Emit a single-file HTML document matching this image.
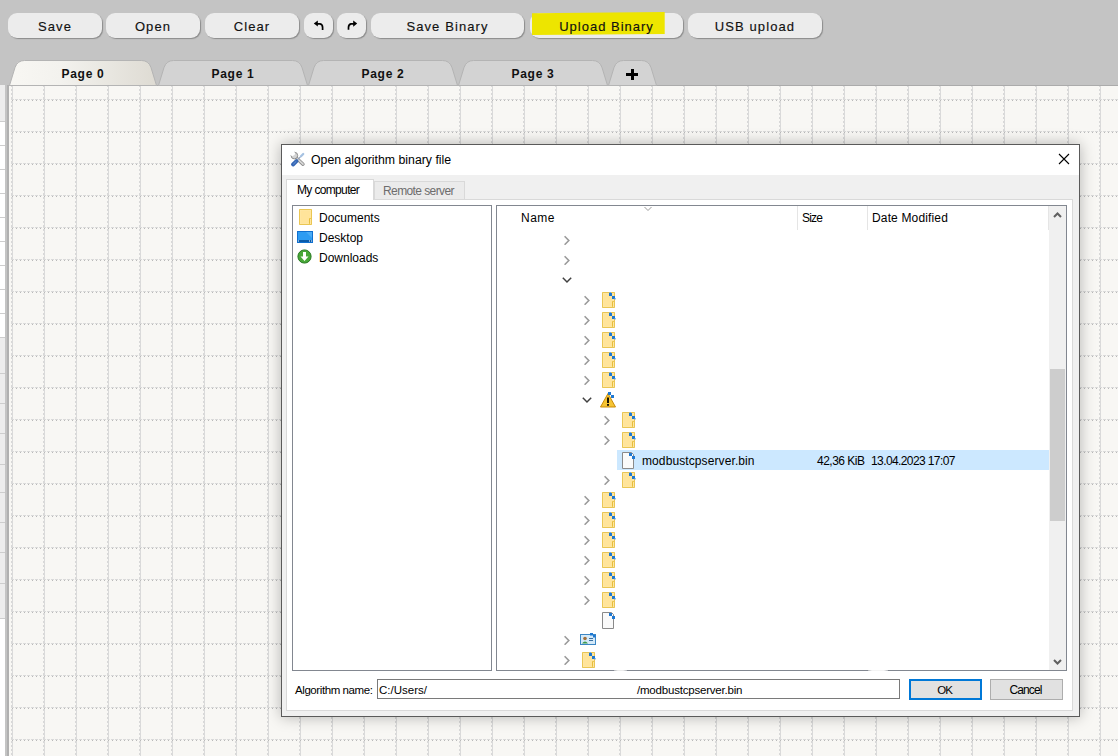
<!DOCTYPE html>
<html><head><meta charset="utf-8">
<style>
html,body{margin:0;padding:0;}
body{width:1118px;height:756px;position:relative;overflow:hidden;background:#c4c4c4;font-family:"Liberation Sans",sans-serif;}
div,span,svg{position:absolute;box-sizing:border-box;}
.btn{top:13px;height:25px;background:#ececec;border-radius:9px;box-shadow:1px 1px 1px #8c8c8c;font-size:13px;color:#111;text-align:center;line-height:28px;letter-spacing:1.1px;white-space:nowrap;-webkit-text-stroke:0.15px #111;}
.tab{top:60px;height:26px;}
.tab span{top:7px;left:0;width:100%;text-align:center;font-weight:bold;font-size:12px;color:#111;letter-spacing:0.7px;}
.t{font-size:12px;color:#000;white-space:nowrap;line-height:14px;}
.chev{width:7px;height:10px;}
.fold{width:16px;height:16px;}
</style></head><body>
<!-- toolbar buttons -->
<div class="btn" style="left:8px;width:94px;">Save</div>
<div class="btn" style="left:106px;width:94px;">Open</div>
<div class="btn" style="left:205px;width:94px;">Clear</div>
<div class="btn" style="left:304px;width:29px;"></div><svg style="left:310px;top:16px;" width="20" height="18" viewBox="310 16 20 18"><path d="M313.8,23.5 L317.8,20.5 L317.8,26.6 Z" fill="#000"/><path d="M317,23.9 L320,23.9 Q322.6,24.4 322.6,27.4 L322.6,30" fill="none" stroke="#000" stroke-width="1.7"/></svg>
<div class="btn" style="left:337px;width:29px;"></div><svg style="left:342px;top:16px;" width="20" height="18" viewBox="342 16 20 18"><path d="M357.2,23.5 L353.2,20.5 L353.2,26.8 Z" fill="#000"/><path d="M354,23.9 L351,23.9 Q348.5,24.6 348.5,27.4 L348.5,29.8" fill="none" stroke="#000" stroke-width="1.7"/></svg>
<div class="btn" style="left:371px;width:153px;">Save Binary</div>
<div class="btn" style="left:530px;width:153px;"></div>
<svg style="left:530px;top:10px;" width="140" height="28"><polygon points="2,3.2 134.7,2 134.7,24 2,25" fill="#ede500"/></svg>
<div class="btn" style="left:530px;width:153px;background:transparent;box-shadow:none;letter-spacing:1px;">Upload Binary</div>
<div class="btn" style="left:688px;width:134px;">USB upload</div>

<!-- canvas -->
<div style="left:0;top:85px;width:5px;height:36px;background:#ededed;"></div>
<div style="left:0;top:121px;width:5px;height:216px;background:#fff;"></div>
<div style="left:0;top:337px;width:5px;height:281px;background:#ededed;"></div>
<div style="left:0;top:618px;width:5px;height:138px;background:#fff;"></div>
<div style="left:0;top:121px;width:5px;height:1px;background:#cdcdcd;"></div>
<div style="left:0;top:145px;width:5px;height:1px;background:#cdcdcd;"></div>
<div style="left:0;top:169px;width:5px;height:1px;background:#cdcdcd;"></div>
<div style="left:0;top:193px;width:5px;height:1px;background:#cdcdcd;"></div>
<div style="left:0;top:217px;width:5px;height:1px;background:#cdcdcd;"></div>
<div style="left:0;top:241px;width:5px;height:1px;background:#cdcdcd;"></div>
<div style="left:0;top:265px;width:5px;height:1px;background:#cdcdcd;"></div>
<div style="left:0;top:289px;width:5px;height:1px;background:#cdcdcd;"></div>
<div style="left:0;top:313px;width:5px;height:1px;background:#cdcdcd;"></div>
<div style="left:0;top:337px;width:5px;height:1px;background:#cdcdcd;"></div>
<div style="left:0;top:373px;width:5px;height:1px;background:#cdcdcd;"></div>
<div style="left:0;top:403px;width:5px;height:1px;background:#cdcdcd;"></div>
<div style="left:0;top:433px;width:5px;height:1px;background:#cdcdcd;"></div>
<div style="left:0;top:464px;width:5px;height:1px;background:#cdcdcd;"></div>
<div style="left:0;top:492px;width:5px;height:1px;background:#cdcdcd;"></div>
<div style="left:0;top:522px;width:5px;height:1px;background:#cdcdcd;"></div>
<div style="left:0;top:552px;width:5px;height:1px;background:#cdcdcd;"></div>
<div style="left:0;top:583px;width:5px;height:1px;background:#cdcdcd;"></div>
<div style="left:0;top:618px;width:5px;height:1px;background:#cdcdcd;"></div>
<div style="left:5px;top:85px;width:2px;height:671px;background:#c4c4c4;"></div><div style="left:7px;top:85px;width:2px;height:671px;background:#b0b0b0;"></div>
<div style="left:9px;top:85px;width:1109px;height:671px;background:#f8f7f4;border-top:1px solid #ababab;"></div>
<svg style="left:9px;top:86px;" width="1109" height="670">
<defs><pattern id="grid" patternUnits="userSpaceOnUse" x="3" y="14" width="32" height="32">
<rect x="0" y="0" width="1" height="32" fill="#dadada"/>
<rect x="31" y="1" width="1" height="2" fill="#d8d8d8"/><rect x="31" y="5" width="1" height="2" fill="#d8d8d8"/><rect x="31" y="9" width="1" height="2" fill="#d8d8d8"/><rect x="31" y="13" width="1" height="2" fill="#d8d8d8"/><rect x="31" y="17" width="1" height="2" fill="#d8d8d8"/><rect x="31" y="21" width="1" height="2" fill="#d8d8d8"/><rect x="31" y="25" width="1" height="2" fill="#d8d8d8"/><rect x="31" y="29" width="1" height="2" fill="#d8d8d8"/>
<rect x="0" y="0" width="1" height="1" fill="#b9b9b9"/><rect x="31" y="31" width="3" height="1" fill="#dadada"/><rect x="4" y="0" width="1" height="1" fill="#b9b9b9"/><rect x="3" y="31" width="3" height="1" fill="#dadada"/><rect x="8" y="0" width="1" height="1" fill="#b9b9b9"/><rect x="7" y="31" width="3" height="1" fill="#dadada"/><rect x="12" y="0" width="1" height="1" fill="#b9b9b9"/><rect x="11" y="31" width="3" height="1" fill="#dadada"/><rect x="16" y="0" width="1" height="1" fill="#b9b9b9"/><rect x="15" y="31" width="3" height="1" fill="#dadada"/><rect x="20" y="0" width="1" height="1" fill="#b9b9b9"/><rect x="19" y="31" width="3" height="1" fill="#dadada"/><rect x="24" y="0" width="1" height="1" fill="#b9b9b9"/><rect x="23" y="31" width="3" height="1" fill="#dadada"/><rect x="28" y="0" width="1" height="1" fill="#b9b9b9"/><rect x="27" y="31" width="3" height="1" fill="#dadada"/><rect x="0" y="31" width="2" height="1" fill="#dadada"/>
</pattern></defs>
<rect x="1" y="0" width="1108" height="670" fill="url(#grid)"/>
</svg>

<!-- tabs -->
<svg style="left:0;top:0;" width="700" height="90">
<defs><linearGradient id="ag" x1="0" x2="1" y1="0" y2="0"><stop offset="0" stop-color="#f8f7f3"/><stop offset="0.35" stop-color="#f3f2ee"/><stop offset="1" stop-color="#dedbd3"/></linearGradient></defs>
<path d="M9.5,85.5 L15.0,67.5 Q17.5,60.5 24.5,60.5 L141.5,60.5 Q148.5,60.5 151.0,67.5 L156.5,85.5 Z" fill="url(#ag)" stroke="#b4b4b4" stroke-width="1"/>
<path d="M158.5,85.5 L164.0,67.5 Q166.5,60.5 173.5,60.5 L292.5,60.5 Q299.5,60.5 302.0,67.5 L307.5,85.5 Z" fill="#d3d3d3" stroke="#b4b4b4" stroke-width="1"/>
<path d="M308.5,85.5 L314.0,67.5 Q316.5,60.5 323.5,60.5 L442.5,60.5 Q449.5,60.5 452.0,67.5 L457.5,85.5 Z" fill="#d3d3d3" stroke="#b4b4b4" stroke-width="1"/>
<path d="M458.5,85.5 L464.0,67.5 Q466.5,60.5 473.5,60.5 L592.5,60.5 Q599.5,60.5 602.0,67.5 L607.5,85.5 Z" fill="#d3d3d3" stroke="#b4b4b4" stroke-width="1"/>
<path d="M608.5,85.5 L614.0,67.5 Q616.5,60.5 623.5,60.5 L641.5,60.5 Q648.5,60.5 651.0,67.5 L656.5,85.5 Z" fill="#d3d3d3" stroke="#b4b4b4" stroke-width="1"/>
</svg>
<div class="tab" style="left:9px;width:148px;"><span>Page 0</span></div>
<div class="tab" style="left:158px;width:150px;"><span>Page 1</span></div>
<div class="tab" style="left:308px;width:150px;"><span>Page 2</span></div>
<div class="tab" style="left:458px;width:150px;"><span>Page 3</span></div>
<div style="left:626px;top:73px;width:12px;height:3px;background:#000;"></div><div style="left:631px;top:69px;width:3px;height:11px;background:#000;"></div>

<!-- dialog -->
<div id="dlg" style="left:281px;top:144px;width:799px;height:573px;background:#f0f0f0;border:1px solid #5a5a5a;box-shadow:0 0 14px rgba(0,0,0,0.28);"></div>
<div style="left:282px;top:145px;width:797px;height:30px;background:#fff;"></div>
<svg style="left:288px;top:149px;" width="20" height="20" viewBox="0 0 20 20">
<path d="M8.6,9.2 L15,15.2" stroke="#8e8e8e" stroke-width="3.4" stroke-linecap="round"/>
<path d="M8.6,9.2 L15,15.2" stroke="#dadada" stroke-width="1.6" stroke-linecap="round"/>
<circle cx="6.4" cy="6.6" r="3.3" fill="#d4d4d4" stroke="#8e8e8e" stroke-width="1"/>
<path d="M2,5.2 L5.2,2 L7.2,4 L6.6,6 L4,7.2 Z" fill="#fff"/>
<path d="M12.4,7.8 L9.6,10.6" stroke="#8f9fb8" stroke-width="1.2"/>
<path d="M15.2,5 L13,7.2" stroke="#a6c2e2" stroke-width="2.3" stroke-linecap="round"/>
<path d="M8.5,12.2 L5,15.5" stroke="#3566b4" stroke-width="3.9" stroke-linecap="round"/>
<path d="M8,12.6 L5.5,15" stroke="#6a96d6" stroke-width="1" stroke-linecap="round"/>
</svg>
<div class="t" style="left:311px;top:153px;font-size:12.3px;color:#000;">Open algorithm binary file</div>
<svg style="left:1058px;top:153px;" width="12" height="12" viewBox="0 0 12 12"><path d="M1,1 L11,11 M11,1 L1,11" stroke="#000" stroke-width="1.1"/></svg>
<div style="left:286px;top:199px;width:787px;height:512px;background:#fff;border:1px solid #d9d9d9;"></div>
<div style="left:374px;top:181px;width:91px;height:18px;background:#ebebeb;border:1px solid #d9d9d9;border-bottom:none;"></div>
<div style="left:286px;top:179px;width:88px;height:21px;background:#fff;border:1px solid #d9d9d9;border-bottom:none;"></div>
<div class="t" style="left:297px;top:183px;letter-spacing:-0.65px;">My computer</div>
<div class="t" style="left:383px;top:184px;color:#6d6d6d;letter-spacing:-0.6px;">Remote server</div>
<div style="left:292px;top:205px;width:200px;height:466px;background:#fff;border:1px solid #828790;"></div>
<svg style="left:299px;top:209px;" width="16" height="17" viewBox="0 0 16 17"><path d="M0.5,0.5 H12.5 V15.5 H0.5 Z" fill="#ffe49a" stroke="#e6be3c" stroke-width="1"/><path d="M10.5,15.5 V9.5 H12.5" fill="none" stroke="#e6be3c" stroke-width="1"/><rect x="1" y="1" width="11" height="14" fill="none" stroke="#fff0bf" stroke-width="0.6" opacity="0.6"/></svg><svg style="left:297px;top:231px;" width="17" height="13" viewBox="0 0 17 13">
<rect x="0.5" y="0.5" width="15" height="11" fill="#2e9cf2" stroke="#1070d0"/>
<path d="M9,1 L15,1 L15,7 Z" fill="#6cc0fa" opacity="0.45"/>
<rect x="1" y="9" width="14" height="2" fill="#0b5aa8"/>
<rect x="1" y="9.5" width="1" height="1" fill="#fff"/><rect x="12" y="9.5" width="1" height="1" fill="#fff"/><rect x="14" y="9.5" width="1" height="1" fill="#fff"/>
</svg>
<svg style="left:297px;top:249px;" width="16" height="16" viewBox="0 0 16 16">
<circle cx="7.5" cy="7.5" r="6.6" fill="#48a838" stroke="#2a7a24" stroke-width="1"/>
<path d="M6,3 H9 V7.5 H11.5 L7.5,12 L3.5,7.5 H6 Z" fill="#fff"/>
</svg>
<div class="t" style="left:319px;top:211px;">Documents</div>
<div class="t" style="left:319px;top:231px;">Desktop</div>
<div class="t" style="left:319px;top:251px;">Downloads</div>
<div style="left:496px;top:205px;width:571px;height:466px;background:#fff;border:1px solid #828790;"></div>
<div style="left:868px;top:670px;width:20px;height:1px;background:linear-gradient(90deg,#b0b3b8,#f4f4f4 20%,#f4f4f4 80%,#b0b3b8);"></div>
<div style="left:614px;top:670px;width:13px;height:1px;background:linear-gradient(90deg,#b0b3b8,#ececec 30%,#ececec 70%,#b0b3b8);"></div>
<div class="t" style="left:521px;top:211px;letter-spacing:0.5px;">Name</div>
<div class="t" style="left:802px;top:211px;letter-spacing:-0.8px;">Size</div>
<div class="t" style="left:872px;top:211px;letter-spacing:0.15px;">Date Modified</div>
<div style="left:797px;top:206px;width:1px;height:24px;background:#e5e5e5;"></div>
<div style="left:867px;top:206px;width:1px;height:24px;background:#e5e5e5;"></div>
<div style="left:1048px;top:206px;width:1px;height:24px;background:#e5e5e5;"></div>
<svg style="left:643px;top:205px;" width="10" height="8" viewBox="0 0 10 8"><path d="M1.5,2 L5,5.5 L8.5,2" fill="none" stroke="#9a9a9a" stroke-width="1"/></svg>
<div style="left:1049px;top:206px;width:17px;height:464px;background:#f0f0f0;"></div>
<div style="left:1050px;top:369px;width:15px;height:152px;background:#cdcdcd;"></div>
<svg style="left:1052px;top:210px;" width="12" height="10" viewBox="0 0 12 10"><path d="M2,7 L5.5,3.5 L9,7" fill="none" stroke="#606060" stroke-width="2"/></svg>
<svg style="left:1052px;top:657px;" width="12" height="10" viewBox="0 0 12 10"><path d="M2,3 L5.5,6.5 L9,3" fill="none" stroke="#606060" stroke-width="2"/></svg>
<div style="left:617px;top:450px;width:432px;height:20px;background:#cce8ff;"></div>
<svg style="left:562px;top:235px;" width="10" height="10" viewBox="0 0 10 10"><path d="M2.6,1.3 L6.8,5.5 L2.6,9.7" fill="none" stroke="#9a9a9a" stroke-width="1.6"/></svg><svg style="left:562px;top:255px;" width="10" height="10" viewBox="0 0 10 10"><path d="M2.6,1.3 L6.8,5.5 L2.6,9.7" fill="none" stroke="#9a9a9a" stroke-width="1.6"/></svg><svg style="left:562px;top:275px;" width="10" height="10" viewBox="0 0 10 10"><path d="M0.8,2.8 L5,7 L9.2,2.8" fill="none" stroke="#404040" stroke-width="1.5"/></svg><svg style="left:582px;top:295px;" width="10" height="10" viewBox="0 0 10 10"><path d="M2.6,1.3 L6.8,5.5 L2.6,9.7" fill="none" stroke="#9a9a9a" stroke-width="1.6"/></svg><svg style="left:602px;top:292px;" width="16" height="17" viewBox="0 0 16 17"><path d="M0.5,0.5 H12.5 V15.5 H0.5 Z" fill="#ffe49a" stroke="#e6be3c" stroke-width="1"/><path d="M10.5,15.5 V9.5 H12.5" fill="none" stroke="#e6be3c" stroke-width="1"/><rect x="1" y="1" width="11" height="14" fill="none" stroke="#fff0bf" stroke-width="0.6" opacity="0.6"/><rect x="7" y="1" width="3" height="3" fill="#1e78d2"/><rect x="10" y="4" width="3" height="3" fill="#1e78d2"/><rect x="7.5" y="0" width="1.5" height="1" fill="#6aa8e6"/><rect x="12.5" y="6" width="1.2" height="1.5" fill="#6aa8e6"/></svg><svg style="left:582px;top:315px;" width="10" height="10" viewBox="0 0 10 10"><path d="M2.6,1.3 L6.8,5.5 L2.6,9.7" fill="none" stroke="#9a9a9a" stroke-width="1.6"/></svg><svg style="left:602px;top:312px;" width="16" height="17" viewBox="0 0 16 17"><path d="M0.5,0.5 H12.5 V15.5 H0.5 Z" fill="#ffe49a" stroke="#e6be3c" stroke-width="1"/><path d="M10.5,15.5 V9.5 H12.5" fill="none" stroke="#e6be3c" stroke-width="1"/><rect x="1" y="1" width="11" height="14" fill="none" stroke="#fff0bf" stroke-width="0.6" opacity="0.6"/><rect x="7" y="1" width="3" height="3" fill="#1e78d2"/><rect x="10" y="4" width="3" height="3" fill="#1e78d2"/><rect x="7.5" y="0" width="1.5" height="1" fill="#6aa8e6"/><rect x="12.5" y="6" width="1.2" height="1.5" fill="#6aa8e6"/></svg><svg style="left:582px;top:335px;" width="10" height="10" viewBox="0 0 10 10"><path d="M2.6,1.3 L6.8,5.5 L2.6,9.7" fill="none" stroke="#9a9a9a" stroke-width="1.6"/></svg><svg style="left:602px;top:332px;" width="16" height="17" viewBox="0 0 16 17"><path d="M0.5,0.5 H12.5 V15.5 H0.5 Z" fill="#ffe49a" stroke="#e6be3c" stroke-width="1"/><path d="M10.5,15.5 V9.5 H12.5" fill="none" stroke="#e6be3c" stroke-width="1"/><rect x="1" y="1" width="11" height="14" fill="none" stroke="#fff0bf" stroke-width="0.6" opacity="0.6"/><rect x="7" y="1" width="3" height="3" fill="#1e78d2"/><rect x="10" y="4" width="3" height="3" fill="#1e78d2"/><rect x="7.5" y="0" width="1.5" height="1" fill="#6aa8e6"/><rect x="12.5" y="6" width="1.2" height="1.5" fill="#6aa8e6"/></svg><svg style="left:582px;top:355px;" width="10" height="10" viewBox="0 0 10 10"><path d="M2.6,1.3 L6.8,5.5 L2.6,9.7" fill="none" stroke="#9a9a9a" stroke-width="1.6"/></svg><svg style="left:602px;top:352px;" width="16" height="17" viewBox="0 0 16 17"><path d="M0.5,0.5 H12.5 V15.5 H0.5 Z" fill="#ffe49a" stroke="#e6be3c" stroke-width="1"/><path d="M10.5,15.5 V9.5 H12.5" fill="none" stroke="#e6be3c" stroke-width="1"/><rect x="1" y="1" width="11" height="14" fill="none" stroke="#fff0bf" stroke-width="0.6" opacity="0.6"/><rect x="7" y="1" width="3" height="3" fill="#1e78d2"/><rect x="10" y="4" width="3" height="3" fill="#1e78d2"/><rect x="7.5" y="0" width="1.5" height="1" fill="#6aa8e6"/><rect x="12.5" y="6" width="1.2" height="1.5" fill="#6aa8e6"/></svg><svg style="left:582px;top:375px;" width="10" height="10" viewBox="0 0 10 10"><path d="M2.6,1.3 L6.8,5.5 L2.6,9.7" fill="none" stroke="#9a9a9a" stroke-width="1.6"/></svg><svg style="left:602px;top:372px;" width="16" height="17" viewBox="0 0 16 17"><path d="M0.5,0.5 H12.5 V15.5 H0.5 Z" fill="#ffe49a" stroke="#e6be3c" stroke-width="1"/><path d="M10.5,15.5 V9.5 H12.5" fill="none" stroke="#e6be3c" stroke-width="1"/><rect x="1" y="1" width="11" height="14" fill="none" stroke="#fff0bf" stroke-width="0.6" opacity="0.6"/><rect x="7" y="1" width="3" height="3" fill="#1e78d2"/><rect x="10" y="4" width="3" height="3" fill="#1e78d2"/><rect x="7.5" y="0" width="1.5" height="1" fill="#6aa8e6"/><rect x="12.5" y="6" width="1.2" height="1.5" fill="#6aa8e6"/></svg><svg style="left:582px;top:395px;" width="10" height="10" viewBox="0 0 10 10"><path d="M0.8,2.8 L5,7 L9.2,2.8" fill="none" stroke="#404040" stroke-width="1.5"/></svg><svg style="left:600px;top:392px;" width="17" height="16" viewBox="0 0 17 16">
<path d="M8,1.5 L15.5,15 H0.5 Z" fill="#f6c433" stroke="#c98b08" stroke-width="1" stroke-linejoin="round"/>
<rect x="7.1" y="5.5" width="1.8" height="5.5" fill="#000"/><rect x="7.1" y="12" width="1.8" height="1.8" fill="#000"/>
<rect x="8" y="0" width="3" height="3" fill="#1e78d2"/><rect x="11" y="3" width="3" height="3" fill="#1e78d2"/>
</svg>
<svg style="left:602px;top:415px;" width="10" height="10" viewBox="0 0 10 10"><path d="M2.6,1.3 L6.8,5.5 L2.6,9.7" fill="none" stroke="#9a9a9a" stroke-width="1.6"/></svg><svg style="left:622px;top:412px;" width="16" height="17" viewBox="0 0 16 17"><path d="M0.5,0.5 H12.5 V15.5 H0.5 Z" fill="#ffe49a" stroke="#e6be3c" stroke-width="1"/><path d="M10.5,15.5 V9.5 H12.5" fill="none" stroke="#e6be3c" stroke-width="1"/><rect x="1" y="1" width="11" height="14" fill="none" stroke="#fff0bf" stroke-width="0.6" opacity="0.6"/><rect x="7" y="1" width="3" height="3" fill="#1e78d2"/><rect x="10" y="4" width="3" height="3" fill="#1e78d2"/><rect x="7.5" y="0" width="1.5" height="1" fill="#6aa8e6"/><rect x="12.5" y="6" width="1.2" height="1.5" fill="#6aa8e6"/></svg><svg style="left:602px;top:435px;" width="10" height="10" viewBox="0 0 10 10"><path d="M2.6,1.3 L6.8,5.5 L2.6,9.7" fill="none" stroke="#9a9a9a" stroke-width="1.6"/></svg><svg style="left:622px;top:432px;" width="16" height="17" viewBox="0 0 16 17"><path d="M0.5,0.5 H12.5 V15.5 H0.5 Z" fill="#ffe49a" stroke="#e6be3c" stroke-width="1"/><path d="M10.5,15.5 V9.5 H12.5" fill="none" stroke="#e6be3c" stroke-width="1"/><rect x="1" y="1" width="11" height="14" fill="none" stroke="#fff0bf" stroke-width="0.6" opacity="0.6"/><rect x="7" y="1" width="3" height="3" fill="#1e78d2"/><rect x="10" y="4" width="3" height="3" fill="#1e78d2"/><rect x="7.5" y="0" width="1.5" height="1" fill="#6aa8e6"/><rect x="12.5" y="6" width="1.2" height="1.5" fill="#6aa8e6"/></svg><svg style="left:622px;top:452px;" width="16" height="17" viewBox="0 0 16 17"><path d="M0.5,0.5 H9.5 L11.5,2.5 V16.5 H0.5 Z" fill="#fafafa" stroke="#8a8a8a" stroke-width="1"/><rect x="7" y="1" width="3" height="3" fill="#1e78d2"/><rect x="10" y="4" width="3" height="3" fill="#1e78d2"/></svg><svg style="left:602px;top:475px;" width="10" height="10" viewBox="0 0 10 10"><path d="M2.6,1.3 L6.8,5.5 L2.6,9.7" fill="none" stroke="#9a9a9a" stroke-width="1.6"/></svg><svg style="left:622px;top:472px;" width="16" height="17" viewBox="0 0 16 17"><path d="M0.5,0.5 H12.5 V15.5 H0.5 Z" fill="#ffe49a" stroke="#e6be3c" stroke-width="1"/><path d="M10.5,15.5 V9.5 H12.5" fill="none" stroke="#e6be3c" stroke-width="1"/><rect x="1" y="1" width="11" height="14" fill="none" stroke="#fff0bf" stroke-width="0.6" opacity="0.6"/><rect x="7" y="1" width="3" height="3" fill="#1e78d2"/><rect x="10" y="4" width="3" height="3" fill="#1e78d2"/><rect x="7.5" y="0" width="1.5" height="1" fill="#6aa8e6"/><rect x="12.5" y="6" width="1.2" height="1.5" fill="#6aa8e6"/></svg><svg style="left:582px;top:495px;" width="10" height="10" viewBox="0 0 10 10"><path d="M2.6,1.3 L6.8,5.5 L2.6,9.7" fill="none" stroke="#9a9a9a" stroke-width="1.6"/></svg><svg style="left:602px;top:492px;" width="16" height="17" viewBox="0 0 16 17"><path d="M0.5,0.5 H12.5 V15.5 H0.5 Z" fill="#ffe49a" stroke="#e6be3c" stroke-width="1"/><path d="M10.5,15.5 V9.5 H12.5" fill="none" stroke="#e6be3c" stroke-width="1"/><rect x="1" y="1" width="11" height="14" fill="none" stroke="#fff0bf" stroke-width="0.6" opacity="0.6"/><rect x="7" y="1" width="3" height="3" fill="#1e78d2"/><rect x="10" y="4" width="3" height="3" fill="#1e78d2"/><rect x="7.5" y="0" width="1.5" height="1" fill="#6aa8e6"/><rect x="12.5" y="6" width="1.2" height="1.5" fill="#6aa8e6"/></svg><svg style="left:582px;top:515px;" width="10" height="10" viewBox="0 0 10 10"><path d="M2.6,1.3 L6.8,5.5 L2.6,9.7" fill="none" stroke="#9a9a9a" stroke-width="1.6"/></svg><svg style="left:602px;top:512px;" width="16" height="17" viewBox="0 0 16 17"><path d="M0.5,0.5 H12.5 V15.5 H0.5 Z" fill="#ffe49a" stroke="#e6be3c" stroke-width="1"/><path d="M10.5,15.5 V9.5 H12.5" fill="none" stroke="#e6be3c" stroke-width="1"/><rect x="1" y="1" width="11" height="14" fill="none" stroke="#fff0bf" stroke-width="0.6" opacity="0.6"/><rect x="7" y="1" width="3" height="3" fill="#1e78d2"/><rect x="10" y="4" width="3" height="3" fill="#1e78d2"/><rect x="7.5" y="0" width="1.5" height="1" fill="#6aa8e6"/><rect x="12.5" y="6" width="1.2" height="1.5" fill="#6aa8e6"/></svg><svg style="left:582px;top:535px;" width="10" height="10" viewBox="0 0 10 10"><path d="M2.6,1.3 L6.8,5.5 L2.6,9.7" fill="none" stroke="#9a9a9a" stroke-width="1.6"/></svg><svg style="left:602px;top:532px;" width="16" height="17" viewBox="0 0 16 17"><path d="M0.5,0.5 H12.5 V15.5 H0.5 Z" fill="#ffe49a" stroke="#e6be3c" stroke-width="1"/><path d="M10.5,15.5 V9.5 H12.5" fill="none" stroke="#e6be3c" stroke-width="1"/><rect x="1" y="1" width="11" height="14" fill="none" stroke="#fff0bf" stroke-width="0.6" opacity="0.6"/><rect x="7" y="1" width="3" height="3" fill="#1e78d2"/><rect x="10" y="4" width="3" height="3" fill="#1e78d2"/><rect x="7.5" y="0" width="1.5" height="1" fill="#6aa8e6"/><rect x="12.5" y="6" width="1.2" height="1.5" fill="#6aa8e6"/></svg><svg style="left:582px;top:555px;" width="10" height="10" viewBox="0 0 10 10"><path d="M2.6,1.3 L6.8,5.5 L2.6,9.7" fill="none" stroke="#9a9a9a" stroke-width="1.6"/></svg><svg style="left:602px;top:552px;" width="16" height="17" viewBox="0 0 16 17"><path d="M0.5,0.5 H12.5 V15.5 H0.5 Z" fill="#ffe49a" stroke="#e6be3c" stroke-width="1"/><path d="M10.5,15.5 V9.5 H12.5" fill="none" stroke="#e6be3c" stroke-width="1"/><rect x="1" y="1" width="11" height="14" fill="none" stroke="#fff0bf" stroke-width="0.6" opacity="0.6"/><rect x="7" y="1" width="3" height="3" fill="#1e78d2"/><rect x="10" y="4" width="3" height="3" fill="#1e78d2"/><rect x="7.5" y="0" width="1.5" height="1" fill="#6aa8e6"/><rect x="12.5" y="6" width="1.2" height="1.5" fill="#6aa8e6"/></svg><svg style="left:582px;top:575px;" width="10" height="10" viewBox="0 0 10 10"><path d="M2.6,1.3 L6.8,5.5 L2.6,9.7" fill="none" stroke="#9a9a9a" stroke-width="1.6"/></svg><svg style="left:602px;top:572px;" width="16" height="17" viewBox="0 0 16 17"><path d="M0.5,0.5 H12.5 V15.5 H0.5 Z" fill="#ffe49a" stroke="#e6be3c" stroke-width="1"/><path d="M10.5,15.5 V9.5 H12.5" fill="none" stroke="#e6be3c" stroke-width="1"/><rect x="1" y="1" width="11" height="14" fill="none" stroke="#fff0bf" stroke-width="0.6" opacity="0.6"/><rect x="7" y="1" width="3" height="3" fill="#1e78d2"/><rect x="10" y="4" width="3" height="3" fill="#1e78d2"/><rect x="7.5" y="0" width="1.5" height="1" fill="#6aa8e6"/><rect x="12.5" y="6" width="1.2" height="1.5" fill="#6aa8e6"/></svg><svg style="left:582px;top:595px;" width="10" height="10" viewBox="0 0 10 10"><path d="M2.6,1.3 L6.8,5.5 L2.6,9.7" fill="none" stroke="#9a9a9a" stroke-width="1.6"/></svg><svg style="left:602px;top:592px;" width="16" height="17" viewBox="0 0 16 17"><path d="M0.5,0.5 H12.5 V15.5 H0.5 Z" fill="#ffe49a" stroke="#e6be3c" stroke-width="1"/><path d="M10.5,15.5 V9.5 H12.5" fill="none" stroke="#e6be3c" stroke-width="1"/><rect x="1" y="1" width="11" height="14" fill="none" stroke="#fff0bf" stroke-width="0.6" opacity="0.6"/><rect x="7" y="1" width="3" height="3" fill="#1e78d2"/><rect x="10" y="4" width="3" height="3" fill="#1e78d2"/><rect x="7.5" y="0" width="1.5" height="1" fill="#6aa8e6"/><rect x="12.5" y="6" width="1.2" height="1.5" fill="#6aa8e6"/></svg><svg style="left:602px;top:612px;" width="16" height="17" viewBox="0 0 16 17"><path d="M0.5,0.5 H9.5 L11.5,2.5 V16.5 H0.5 Z" fill="#fafafa" stroke="#8a8a8a" stroke-width="1"/><rect x="7" y="1" width="3" height="3" fill="#1e78d2"/><rect x="10" y="4" width="3" height="3" fill="#1e78d2"/></svg><svg style="left:562px;top:635px;" width="10" height="10" viewBox="0 0 10 10"><path d="M2.6,1.3 L6.8,5.5 L2.6,9.7" fill="none" stroke="#9a9a9a" stroke-width="1.6"/></svg><svg style="left:580px;top:633px;" width="17" height="13" viewBox="0 0 17 13">
<rect x="0.5" y="1.5" width="15" height="10" fill="#d4e9f8" stroke="#3a86c4"/>
<circle cx="5" cy="5.5" r="1.8" fill="#a0703c"/><path d="M2,10.5 Q5,6.5 8,10.5 Z" fill="#3c9a4c"/>
<rect x="9" y="5" width="4" height="1" fill="#3a6fa0"/><rect x="9" y="7" width="4" height="1" fill="#3a6fa0"/>
<rect x="10" y="0" width="3" height="2.5" fill="#1e78d2"/><rect x="13" y="2" width="2.5" height="2.5" fill="#1e78d2"/>
</svg>
<svg style="left:562px;top:655px;" width="10" height="10" viewBox="0 0 10 10"><path d="M2.6,1.3 L6.8,5.5 L2.6,9.7" fill="none" stroke="#9a9a9a" stroke-width="1.6"/></svg><svg style="left:582px;top:652px;" width="16" height="17" viewBox="0 0 16 17"><path d="M0.5,0.5 H12.5 V15.5 H0.5 Z" fill="#ffe49a" stroke="#e6be3c" stroke-width="1"/><path d="M10.5,15.5 V9.5 H12.5" fill="none" stroke="#e6be3c" stroke-width="1"/><rect x="1" y="1" width="11" height="14" fill="none" stroke="#fff0bf" stroke-width="0.6" opacity="0.6"/><rect x="7" y="1" width="3" height="3" fill="#1e78d2"/><rect x="10" y="4" width="3" height="3" fill="#1e78d2"/><rect x="7.5" y="0" width="1.5" height="1" fill="#6aa8e6"/><rect x="12.5" y="6" width="1.2" height="1.5" fill="#6aa8e6"/></svg><div class="t" style="left:642px;top:454px;letter-spacing:0.1px;">modbustcpserver.bin</div>
<div class="t" style="left:817px;top:454px;letter-spacing:-0.5px;">42,36 KiB</div>
<div class="t" style="left:871px;top:454px;letter-spacing:-0.6px;">13.04.2023 17:07</div>
<div class="t" style="left:295px;top:683px;font-size:11.5px;letter-spacing:-0.42px;">Algorithm name:</div>
<div style="left:377px;top:679px;width:523px;height:20px;background:#fff;border:1px solid #7a7a7a;"></div>
<div class="t" style="left:379px;top:683px;font-size:11.5px;">C:/Users/</div>
<div class="t" style="left:637px;top:683px;font-size:11.5px;letter-spacing:-0.2px;">/modbustcpserver.bin</div>
<div style="left:909px;top:679px;width:73px;height:21px;background:#e1e1e1;border:2px solid #0078d7;"></div>
<div class="t" style="left:908px;top:683px;width:73px;text-align:center;letter-spacing:-1px;font-size:11.5px;">OK</div>
<div style="left:990px;top:679px;width:73px;height:21px;background:#e1e1e1;border:1px solid #adadad;"></div>
<div class="t" style="left:989px;top:683px;width:73px;text-align:center;letter-spacing:-0.9px;">Cancel</div>
</body></html>
